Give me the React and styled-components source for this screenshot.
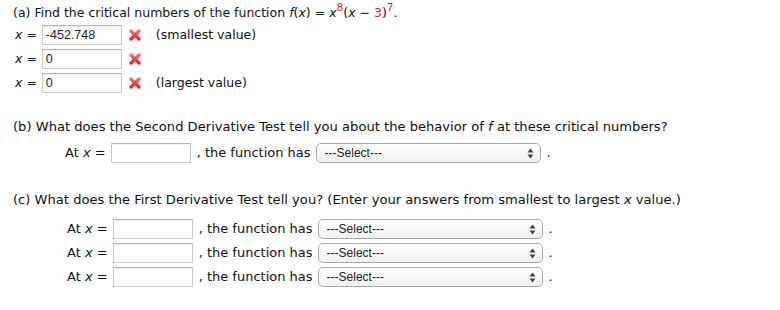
import React from "react";
import styled, { createGlobalStyle } from "styled-components";

const GlobalStyle = createGlobalStyle`
  body {
    margin: 0;
    background: #ffffff;
  }
`;

const Page = styled.div`
  width: 780px;
  height: 310px;
  padding: 5px 0 0 13px;
  box-sizing: border-box;
  font-family: "DejaVu Sans", Verdana, sans-serif;
  font-size: 12.5px;
  line-height: 16px;
  color: #111;
`;

const Question = styled.div`
  margin-top: ${(p) => p.$top || 0}px;
  font-size: ${(p) => p.$size || 12.5}px;
  white-space: nowrap;
`;

const Var = styled.i`
  font-style: italic;
`;

const Red = styled.span`
  color: #e8202a;
`;

const Sup = styled.sup`
  font-size: 10.5px;
  line-height: 0;
  vertical-align: 6px;
  color: #e8202a;
`;

const Rows = styled.div`
  display: flex;
  flex-direction: column;
  gap: 4px;
  margin-top: ${(p) => p.$top}px;
  padding-left: ${(p) => p.$indent}px;
  font-size: ${(p) => p.$size || 12.5}px;
`;

const Row = styled.div`
  display: flex;
  align-items: center;
  height: 20px;
  white-space: nowrap;
`;

const Label = styled.span`
  margin-right: 5px;
`;

const Field = styled.div`
  width: 80px;
  height: 20px;
  box-sizing: border-box;
  border: 1px solid #c9c9c9;
  border-top-color: #b5b5b5;
  box-shadow: inset 0 1px 1px rgba(0, 0, 0, 0.06);
  font-family: "Liberation Sans", Arial, sans-serif;
  font-size: 12.5px;
  line-height: 18px;
  padding-left: 3px;
  color: #222;
  margin-right: ${(p) => p.$gap}px;
`;

const Mark = styled.svg`
  width: 12px;
  height: 12px;
  margin-right: 15px;
  flex: none;
`;

const Note = styled.span``;

const SelectBox = styled.div`
  width: 225px;
  height: 20px;
  box-sizing: border-box;
  margin-left: 5px;
  border: 1px solid #a9a9a9;
  border-radius: 5px;
  background: linear-gradient(#ffffff, #f1f1f1);
  display: flex;
  align-items: center;
  justify-content: space-between;
  padding: 0 6px 0 8px;
  font-family: "Liberation Sans", Arial, sans-serif;
  font-size: 12px;
  color: #222;
`;

const Period = styled.span`
  margin-left: 6px;
`;

const Cross = () => (
  <Mark viewBox="0 0 12 12">
    <defs>
      <linearGradient id="xg" x1="0" y1="0" x2="0" y2="1">
        <stop offset="0" stopColor="#ff6a72" />
        <stop offset="1" stopColor="#e3252f" />
      </linearGradient>
    </defs>
    <path
      d="M2 2 L10 10 M10 2 L2 10"
      stroke="url(#xg)"
      strokeWidth="3.4"
      strokeLinecap="round"
    />
  </Mark>
);

const Arrows = () => (
  <svg width="7" height="11" viewBox="0 0 7 11">
    <path d="M3.5 0.5 L6.5 4.5 L0.5 4.5 Z" fill="#444" />
    <path d="M3.5 10.5 L6.5 6.5 L0.5 6.5 Z" fill="#444" />
  </svg>
);

const partA = [
  { value: "-452.748", note: "(smallest value)" },
  { value: "0", note: "" },
  { value: "0", note: "(largest value)" },
];

const TestRow = () => (
  <Row>
    <Label>
      At <Var>x</Var> =
    </Label>
    <Field $gap={6} />
    <span>, the function has</span>
    <SelectBox>
      <span>---Select---</span>
      <Arrows />
    </SelectBox>
    <Period>.</Period>
  </Row>
);

export default function App() {
  return (
    <>
      <GlobalStyle />
      <Page>
        <Question>
          (a) Find the critical numbers of the function <Var>f</Var>(
          <Var>x</Var>) = <Var>x</Var>
          <Sup>8</Sup>(<Var>x</Var> − <Red>3</Red>)<Sup>7</Sup>.
        </Question>
        <Rows $top={4} $indent={2}>
          {partA.map((r, i) => (
            <Row key={i}>
              <Label>
                <Var>x</Var> =
              </Label>
              <Field $gap={7}>{r.value}</Field>
              <Cross />
              <Note>{r.note}</Note>
            </Row>
          ))}
        </Rows>
        <Question $top={26} $size={13.1}>
          (b) What does the Second Derivative Test tell you about the behavior
          of <Var>f</Var> at these critical numbers?
        </Question>
        <Rows $top={8} $indent={52} $size={13}>
          <TestRow />
        </Rows>
        <Question $top={29} $size={13.1}>
          (c) What does the First Derivative Test tell you? (Enter your answers
          from smallest to largest <Var>x</Var> value.)
        </Question>
        <Rows $top={11} $indent={54} $size={13}>
          <TestRow />
          <TestRow />
          <TestRow />
        </Rows>
      </Page>
    </>
  );
}
